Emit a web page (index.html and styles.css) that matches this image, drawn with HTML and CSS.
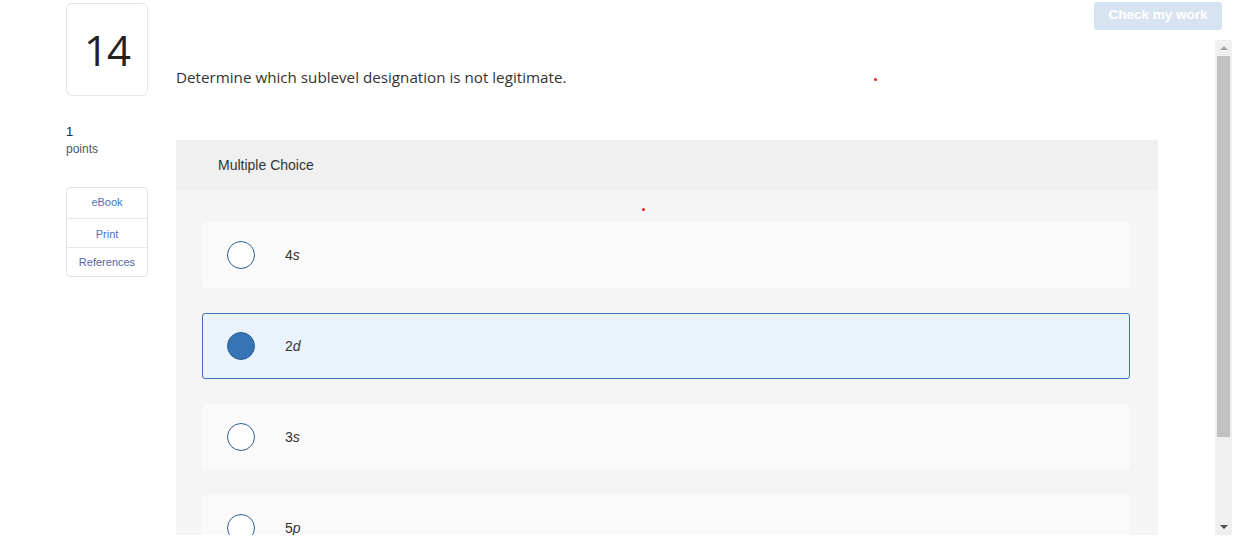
FILE: index.html
```html
<!DOCTYPE html>
<html lang="en">
<head>
<meta charset="utf-8">
<title>Question 14</title>
<link rel="stylesheet" href="styles.css">
</head>
<body>
<div class="page">
  <aside class="side">
    <div class="qnum">14</div>
    <div class="score">
      <div class="score-value">1</div>
      <div class="score-label">points</div>
    </div>
    <ul class="resources">
      <li>eBook</li>
      <li>Print</li>
      <li>References</li>
    </ul>
  </aside>
  <main class="main">
    <header class="topbar">
      <button class="check-btn" type="button" disabled>Check my work</button>
    </header>
    <div class="viewport">
      <div class="scroller">
        <p class="prompt">Determine which sublevel designation is not legitimate.<span class="marker marker-prompt"></span></p>
        <section class="choices">
          <div class="choices-head">Multiple Choice</div>
          <div class="choices-body">
            <span class="marker marker-body"></span>
            <label class="option"><span class="radio"></span><span class="opt-text">4<i>s</i></span></label>
            <label class="option selected"><span class="radio"></span><span class="opt-text">2<i>d</i></span></label>
            <label class="option"><span class="radio"></span><span class="opt-text">3<i>s</i></span></label>
            <label class="option"><span class="radio"></span><span class="opt-text">5<i>p</i></span></label>
          </div>
        </section>
      </div>
      <div class="scrollbar" aria-hidden="true">
        <span class="sb-btn"><span class="arrow-up"></span></span>
        <div class="sb-track"><span class="sb-thumb"></span></div>
        <span class="sb-btn"><span class="arrow-down"></span></span>
      </div>
    </div>
  </main>
</div>
</body>
</html>
```

FILE: styles.css
```css
* { box-sizing: border-box; }

html, body {
  margin: 0;
  padding: 0;
  background: #fff;
  overflow: hidden;
}

body {
  font-family: "Liberation Sans", Arial, sans-serif;
  color: #333;
}

.page {
  display: flex;
  height: 539px;
}

/* left column: question number, score and resources */
.side {
  width: 82px;
  margin-left: 66px;
  padding-top: 3px;
  flex: none;
}

.qnum {
  height: 93px;
  border: 1px solid #e6e6e6;
  border-radius: 6px;
  display: flex;
  align-items: center;
  justify-content: center;
  font-family: "Open Sans", sans-serif;
  font-size: 42px;
  font-weight: 400;
  color: #222;
  letter-spacing: -1px;
}

.score {
  margin-top: 28px;
  line-height: 15px;
}

.score-value {
  font-size: 13px;
  color: #222;
}

.score-label {
  font-size: 12px;
  color: #555;
  margin-top: 3px;
}

.resources {
  list-style: none;
  margin: 30px 0 0;
  padding: 0;
  border: 1px solid #e3e3e3;
  border-radius: 4px;
}

.resources li {
  height: 29px;
  display: flex;
  align-items: center;
  justify-content: center;
  font-size: 11px;
  color: #4a72b8;
  border-top: 1px solid #e6e6e6;
}

.resources li:first-child {
  height: 30px;
  padding-bottom: 2px;
  border-top: none;
}

.resources li:nth-child(2) {
  padding-top: 2px;
}

.resources li:last-child {
  color: #5b63a8;
}

/* right column */
.main {
  flex: 1;
  margin-left: 28px;
  margin-right: 12px;
  display: flex;
  flex-direction: column;
  min-width: 0;
}

.topbar {
  height: 40px;
  display: flex;
  justify-content: flex-end;
  align-items: flex-start;
  padding-top: 2px;
  padding-right: 10px;
  flex: none;
}

.check-btn {
  width: 128px;
  height: 28px;
  border: none;
  border-radius: 3px;
  background: #d7e3f1;
  color: #fff;
  font-family: "Liberation Sans", Arial, sans-serif;
  font-weight: 700;
  font-size: 13.5px;
  line-height: 26px;
  padding: 0 0 2px;
}

.viewport {
  height: 495px;
  display: flex;
  flex: none;
}

.scroller {
  flex: 1;
  overflow: hidden;
  padding-top: 27px;
  padding-right: 57px;
}

.prompt {
  margin: 0;
  font-family: "Open Sans", sans-serif;
  font-size: 15.2px;
  line-height: 20px;
  color: #333;
  position: relative;
}

.marker {
  position: absolute;
  width: 3px;
  height: 3px;
  border-radius: 50%;
  background: #ee1c1c;
}

.marker-prompt { left: 698px; top: 11px; }
.marker-body { left: 466px; top: 18px; }

.choices {
  margin-top: 53px;
  background: #f5f5f5;
  padding-bottom: 30px;
}

.choices-head {
  height: 50px;
  background: #f0f0f0;
  display: flex;
  align-items: center;
  padding-left: 42px;
  font-size: 14px;
  color: #333;
}

.choices-body {
  position: relative;
  padding: 32px 28px 0 26px;
  display: flex;
  flex-direction: column;
  gap: 25px;
}

.option {
  height: 66px;
  background: #fafafa;
  border: 1px solid #fafafa;
  border-radius: 3px;
  display: flex;
  align-items: center;
  padding-left: 24px;
}

.option.selected {
  background: #eaf2fb;
  border-color: #3a72b6;
}

.radio {
  width: 28px;
  height: 28px;
  border-radius: 50%;
  border: 1.5px solid #2f5f92;
  background: #fff;
  flex: none;
}

.option.selected .radio {
  background: #3674b5;
  border-color: #2f5f92;
}

.opt-text {
  margin-left: 30px;
  font-size: 14px;
  color: #333;
}

.opt-text i {
  font-style: italic;
}

/* classic vertical scrollbar beside the question area */
.scrollbar {
  width: 17px;
  flex: none;
  background: #f0f0f0;
  display: flex;
  flex-direction: column;
}

.sb-btn {
  height: 16px;
  display: flex;
  align-items: center;
  justify-content: center;
  flex: none;
}

.arrow-up {
  width: 0;
  height: 0;
  border-left: 4px solid transparent;
  border-right: 4px solid transparent;
  border-bottom: 4px solid #a3a3a3;
}

.arrow-down {
  width: 0;
  height: 0;
  border-left: 4px solid transparent;
  border-right: 4px solid transparent;
  border-top: 4px solid #505050;
}

.sb-track {
  flex: 1;
  padding: 0 2px 0 2px;
}

.sb-thumb {
  display: block;
  height: 381px;
  background: #c1c1c1;
}
```
